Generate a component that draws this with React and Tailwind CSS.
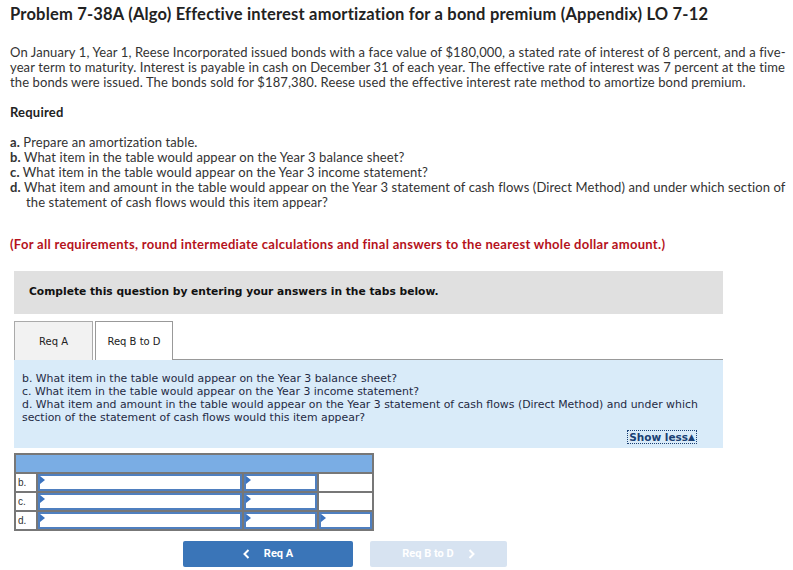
import React from "react";

const body = { fontFamily: "Lato, 'Open Sans', Arial, sans-serif" };
const verd = { fontFamily: "'DejaVu Sans', Verdana, sans-serif" };

function InputCell({ className = "" }) {
  return (
    <div className={"relative h-full border-2 border-[#4f7fbf] bg-white " + className}>
      <svg className="absolute left-0 top-0" width="6" height="8" viewBox="0 0 6 8">
        <path d="M0 0 L5 4 L0 8 Z" fill="#3b73bf" />
      </svg>
    </div>
  );
}

function Row({ label, third }) {
  return (
    <div className="flex h-[19px] border-t-2 border-[#777]">
      <div className="w-[22px] border-r-2 border-[#777] bg-white pl-[2px] text-[10px] leading-[17px] text-[#333]" style={{ fontFamily: "Arial, 'Liberation Sans', sans-serif" }}>
        {label}
      </div>
      <div className="w-[206px] border-r-2 border-[#777]">
        <InputCell />
      </div>
      <div className="w-[75px] border-r-2 border-[#777]">
        <InputCell />
      </div>
      <div className="flex-1">{third ? <InputCell /> : <div className="h-full bg-white" />}</div>
    </div>
  );
}

export default function App() {
  return (
    <div className="relative h-[570px] w-[793px] overflow-hidden bg-white text-[#222]">
      <div className="px-[10px] pt-[4px]" style={body}>
        <h1 className="whitespace-nowrap text-[16.5px] font-bold leading-[20px] tracking-[0.2px] text-[#222]">
          Problem 7-38A (Algo) Effective interest amortization for a bond premium (Appendix) LO 7-12
        </h1>
        <p className="mt-[21px] whitespace-nowrap text-[13px] leading-[15px] tracking-[0.11px] text-[#333]">
          On January 1, Year 1, Reese Incorporated issued bonds with a face value of $180,000, a stated rate of interest of 8 percent, and a five-
          <br />
          year term to maturity. Interest is payable in cash on December 31 of each year. The effective rate of interest was 7 percent at the time
          <br />
          the bonds were issued. The bonds sold for $187,380. Reese used the effective interest rate method to amortize bond premium.
        </p>
        <p className="mt-[15px] text-[13px] font-bold leading-[15px] tracking-[0.2px] text-[#222]">Required</p>
        <div className="mt-[15px] whitespace-nowrap text-[13px] leading-[15px] tracking-[0.11px] text-[#333]">
          <div><b>a.</b> Prepare an amortization table.</div>
          <div><b>b.</b> What item in the table would appear on the Year 3 balance sheet?</div>
          <div><b>c.</b> What item in the table would appear on the Year 3 income statement?</div>
          <div><b>d.</b> What item and amount in the table would appear on the Year 3 statement of cash flows (Direct Method) and under which section of</div>
          <div className="pl-[16px]">the statement of cash flows would this item appear?</div>
        </div>
        <p className="mt-[27px] whitespace-nowrap text-[13px] font-bold leading-[15px] tracking-[0.3px] text-[#b5121b]">
          (For all requirements, round intermediate calculations and final answers to the nearest whole dollar amount.)
        </p>
      </div>

      <div className="ml-[14px] mt-[19px] w-[709px]" style={verd}>
        <div className="flex h-[43px] items-center bg-[#e0e0e0] pl-[15px] text-[10.7px] font-bold text-[#111]">
          Complete this question by entering your answers in the tabs below.
        </div>
        <div className="mt-[7px] flex h-[39px] items-end">
          <div className="flex h-[39px] w-[79px] items-center justify-center border border-b-0 border-[#aaa] bg-[#f2f2f2] text-[10px] text-[#222]">
            Req A
          </div>
          <div className="ml-[2px] flex h-[39px] w-[78px] items-center justify-center border border-b-0 border-[#999] bg-white text-[10px] text-[#222]">
            Req B to D
          </div>
          <div className="h-full flex-1 border-b border-[#999]" />
        </div>
        <div className="h-[88px] bg-[#d9ebf9] px-[8px] pt-[12px] text-[10.9px] leading-[13px] text-[#1f2a44]">
          <div className="whitespace-nowrap">
            b. What item in the table would appear on the Year 3 balance sheet?
            <br />
            c. What item in the table would appear on the Year 3 income statement?
            <br />
            d. What item and amount in the table would appear on the Year 3 statement of cash flows (Direct Method) and under which
            <br />
            section of the statement of cash flows would this item appear?
          </div>
          <div className="mt-[6px] flex justify-end pr-[18px]">
            <span className="flex items-center border border-dotted border-[#1a3f73] px-[1px] text-[10.5px] font-bold leading-[12px] text-[#1a3f73]">
              Show less<span className="text-[9px]">▲</span>
            </span>
          </div>
        </div>
      </div>

      <div className="ml-[14px] mt-[5px] w-[360px] border-2 border-t-2 border-[#777]">
        <div className="h-[17px] bg-[#7aade4]" />
        <Row label="b." />
        <Row label="c." />
        <Row label="d." third />
      </div>

      <div className="mt-[10px] flex" style={{ fontFamily: "Roboto, Arial, sans-serif" }}>
        <div className="ml-[183px] flex h-[26px] w-[170px] items-center justify-center gap-[14px] rounded-[2px] bg-[#3a75b8] text-[11px] font-bold text-white">
          <svg width="7" height="10" viewBox="0 0 7 10"><path d="M5.5 1 L1.5 5 L5.5 9" stroke="white" strokeWidth="2" fill="none" /></svg>
          <span>Req A</span>
        </div>
        <div className="ml-[17px] flex h-[26px] w-[137px] items-center justify-center gap-[14px] rounded-[2px] bg-[#d7e3f1] text-[11px] font-bold text-white">
          <span>Req B to D</span>
          <svg width="7" height="10" viewBox="0 0 7 10"><path d="M1.5 1 L5.5 5 L1.5 9" stroke="white" strokeWidth="2" fill="none" /></svg>
        </div>
      </div>
    </div>
  );
}
